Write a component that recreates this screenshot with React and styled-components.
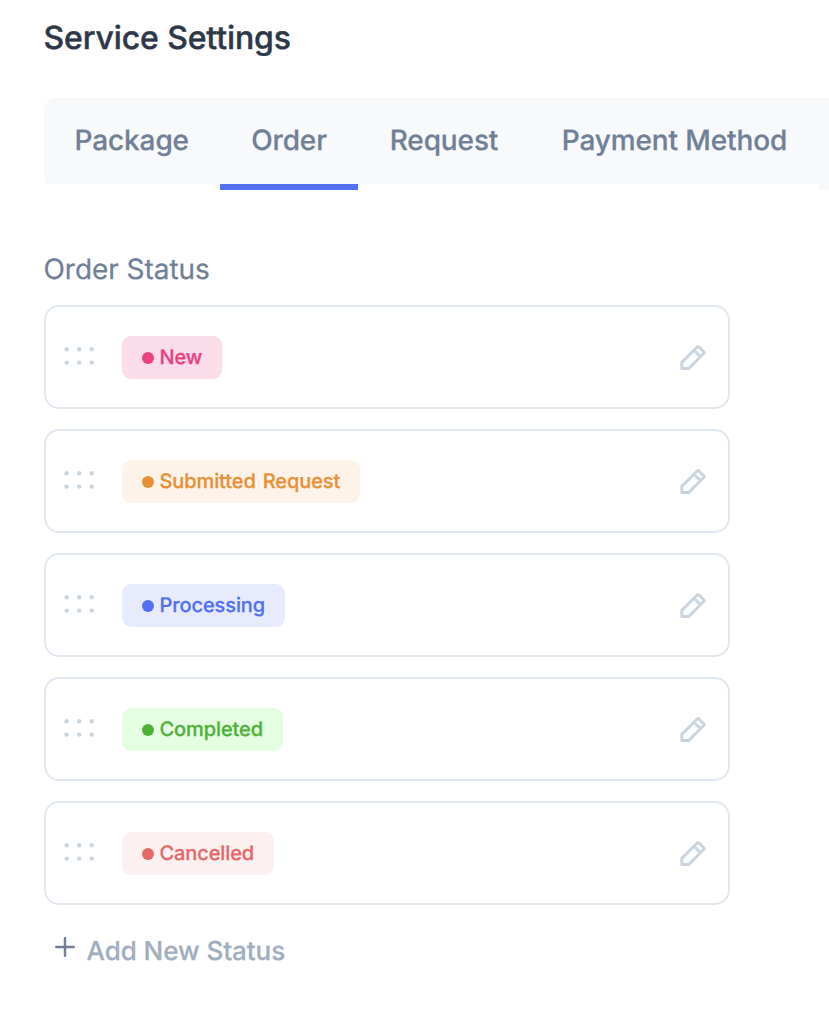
import React from "react";
import styled, { createGlobalStyle } from "styled-components";

const GlobalStyle = createGlobalStyle`
    * {
        box-sizing: border-box;
    }

    body {
        margin: 0;
        background: #FFFFFF;
        font-family: Inter, "Liberation Sans", sans-serif;
        text-rendering: geometricPrecision;
        -webkit-text-stroke: 0.25px currentColor;
        overflow: hidden;
    }
`;

const Page = styled.main`
    width: 100%;
    height: 1024px;
    padding-left: 43.5px;
    overflow: hidden;
`;

const Title = styled.h1`
    margin: 0;
    padding-top: 17px;
    height: 97px;
    color: #2D3748;
    font-size: 32px;
    font-weight: 500;
    line-height: 41px;
    letter-spacing: -0.12px;
    -webkit-text-stroke-width: 0.4px;
`;

const TabBar = styled.nav`
    width: 900px;
    height: 93px;
    display: flex;
    background: #F7F9FB;
    border-radius: 14px;
`;

const Tab = styled.button`
    width: ${({ $width }) => $width}px;
    height: 93px;
    padding: 0 0 2px;
    border: none;
    border-bottom: 6px solid ${({ $active }) => ($active ? "#526FF7" : "#FFFFFF")};
    background: transparent;
    color: #718096;
    font-family: inherit;
    font-size: 28px;
    font-weight: 500;
    line-height: 40px;
    letter-spacing: -0.12px;
    text-rendering: inherit;
    white-space: nowrap;
`;

const SectionTitle = styled.h2`
    margin: 59px 0 16px;
    color: #718096;
    font-size: 28px;
    font-weight: 400;
    line-height: 40px;
    letter-spacing: -0.05px;
`;

const StatusList = styled.div`
    width: 686.5px;
    display: flex;
    flex-direction: column;
    gap: 20px;
`;

const StatusRow = styled.div`
    height: 104px;
    padding: 0 21px 0 18px;
    display: flex;
    align-items: center;
    border: 2px solid #E2E8F0;
    border-radius: 15px;
`;

const Handle = styled.svg`
    width: 32px;
    height: 20px;
    margin-right: 26.5px;
    fill: #CBD5E0;
`;

const Badge = styled.div`
    height: 43px;
    padding: 0 19.5px;
    display: flex;
    align-items: center;
    gap: 6px;
    border-radius: 9px;
    background: ${({ $background }) => $background};
    color: ${({ $color }) => $color};
    font-size: 20px;
    font-weight: 500;
    letter-spacing: -0.1px;
    word-spacing: 1.8px;
    white-space: nowrap;
`;

const Dot = styled.span`
    width: 12px;
    height: 12px;
    margin-top: 2px;
    border-radius: 50%;
    background: currentColor;
`;

const EditButton = styled.button`
    margin-left: auto;
    padding: 0;
    display: flex;
    border: none;
    background: none;
    color: #CBD5E0;
`;

const AddButton = styled.button`
    margin-top: 27px;
    padding: 0 0 0 11px;
    display: flex;
    align-items: center;
    gap: 12px;
    border: none;
    background: none;
    color: #A0AEC0;
    font-family: inherit;
    font-size: 26px;
    font-weight: 500;
    line-height: 40px;
    letter-spacing: -0.05px;
    text-rendering: inherit;

    svg {
        margin-bottom: 10px;
    }
`;

const tabs = [
    { name: "Package", width: 176.5 },
    { name: "Order", width: 138 },
    { name: "Request", width: 172 },
    { name: "Payment Method", width: 289 },
];

const statuses = [
    { name: "New", color: "#ED4081", background: "#FADDE8" },
    { name: "Submitted Request", color: "#E98F35", background: "#FEF3E8" },
    { name: "Processing", color: "#526FF7", background: "#E8EBFD" },
    { name: "Completed", color: "#4FB03A", background: "#E3FEE0" },
    { name: "Cancelled", color: "#E66767", background: "#FCF0F0" },
];

const DragHandle = () => (
    <Handle viewBox="0 0 32 20">
        {[2.6, 15.2, 27.7].map((x) => (
            <React.Fragment key={x}>
                <circle cx={x} cy="2.3" r="2.2" />
                <circle cx={x} cy="15.6" r="2.2" />
            </React.Fragment>
        ))}
    </Handle>
);

const PencilIcon = () => (
    <svg width="28" height="28" viewBox="0 0 28 28" fill="none" stroke="currentColor" strokeWidth="3" strokeLinejoin="round">
        <path d="M2.8 25.4V19.4L18.2 4Q19.1 3.1 20 4L24.7 8.7Q25.6 9.6 24.7 10.5L9.8 25.4Z" />
        <path d="M15 7.2L21.5 13.7" />
    </svg>
);

const PlusIcon = () => (
    <svg width="20" height="20" viewBox="0 0 20 20" fill="none" stroke="#718096" strokeWidth="2.4" strokeLinecap="round">
        <path d="M10 1.2V18.8M1.2 10H18.8" />
    </svg>
);

const App = () => {

    return (
        <Page>
            <GlobalStyle />
            <Title>Service Settings</Title>
            <TabBar>
                {tabs.map((tab) => (
                    <Tab key={tab.name} $width={tab.width} $active={tab.name === "Order"}>
                        {tab.name}
                    </Tab>
                ))}
            </TabBar>
            <SectionTitle>Order Status</SectionTitle>
            <StatusList>
                {statuses.map((status) => (
                    <StatusRow key={status.name}>
                        <DragHandle />
                        <Badge $color={status.color} $background={status.background}>
                            <Dot />
                            {status.name}
                        </Badge>
                        <EditButton aria-label="Edit status">
                            <PencilIcon />
                        </EditButton>
                    </StatusRow>
                ))}
            </StatusList>
            <AddButton>
                <PlusIcon />
                Add New Status
            </AddButton>
        </Page>
    );
};

export default App;
